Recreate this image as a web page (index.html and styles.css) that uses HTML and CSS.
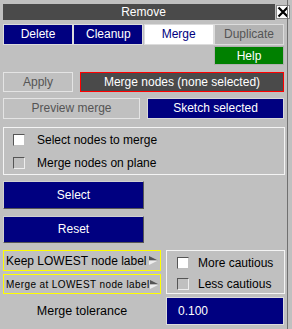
FILE: index.html
```html
<!DOCTYPE html>
<html lang="en">
<head>
<meta charset="utf-8">
<title>Remove</title>
<link rel="stylesheet" href="styles.css">
</head>
<body>
<div class="win">
  <div class="titlerow">
    <div class="title">Remove</div>
    <div class="close">
      <svg width="12" height="12" viewBox="0 0 12 12"><path d="M1.5 1.5 L10.5 10.5 M10.5 1.5 L1.5 10.5" stroke="#000" stroke-width="2.2"/></svg>
    </div>
  </div>

  <div class="tabs">
    <div class="tab navy">Delete</div>
    <div class="tab navy">Cleanup</div>
    <div class="tab active">Merge</div>
    <div class="tab off">Duplicate</div>
  </div>
  <div class="helprow">
    <div class="help">Help</div>
  </div>

  <div class="row r-apply">
    <div class="btn dis apply">Apply</div>
    <div class="btn status">Merge nodes (none selected)</div>
  </div>
  <div class="row r-preview">
    <div class="btn dis preview">Preview merge</div>
    <div class="btn navy sketch">Sketch selected</div>
  </div>

  <div class="group opts">
    <div class="chk"><span class="box white"></span>Select nodes to merge</div>
    <div class="chk"><span class="box"></span>Merge nodes on plane</div>
  </div>

  <div class="big navy sel">Select</div>
  <div class="big navy reset">Reset</div>

  <div class="bottom">
    <div class="lcol">
      <div class="pick keep">Keep LOWEST node label
        <svg class="arr" width="9" height="9" viewBox="0 0 9 9"><polygon points="0,0 9,4.5 0,4.5" fill="#555"/><polygon points="0,4.5 9,4.5 0,9" fill="#eee"/></svg>
      </div>
      <div class="pick at">Merge at LOWEST node label
        <svg class="arr" width="9" height="9" viewBox="0 0 9 9"><polygon points="0,0 9,4.5 0,4.5" fill="#555"/><polygon points="0,4.5 9,4.5 0,9" fill="#eee"/></svg>
      </div>
      <div class="tol-label">Merge tolerance</div>
    </div>
    <div class="rcol">
      <div class="group caut">
        <div class="chk"><span class="box white"></span>More cautious</div>
        <div class="chk"><span class="box"></span>Less cautious</div>
      </div>
      <div class="field">0.100</div>
    </div>
  </div>
</div>
</body>
</html>
```
FILE: styles.css
```css
body {
margin: 0;
background: #c0c0c0;
font-family: "Liberation Sans", Arial, sans-serif;
font-size: 12px;
color: #000;
}
.win {
width: 292px;
height: 329px;
box-sizing: border-box;
padding: 4px 0 0 3px;
position: relative;
}
.win:after {
content: "";
position: absolute;
top: 0;
bottom: 0;
left: 287px;
width: 1px;
background: #707070;
}

/* ---- title ---- */
.titlerow {display: flex; height: 16px;}
.title {
width: 272px;
background: #4a4a4a;
color: #fff;
text-align: center;
line-height: 16px;
padding-left: 9px;
box-sizing: border-box;
}
.close {
width: 14px;
height: 14px;
margin: 1px 0 0 1px;
background: #fff;
border: 1px solid #888;
box-sizing: border-box;
display: flex;
align-items: center;
justify-content: center;
}

/* ---- tabs ---- */
.tabs {
display: grid;
grid-template-columns: 70px 70px 70px 70px;
column-gap: 0.33px;
margin-top: 4px;
height: 21px;
}
.tab {
border: 1px solid #dcdcdc;
text-align: center;
line-height: 19px;
}
.navy {background: #000080; color: #fff;}
.tab.active {background: #fff; color: #000080;}
.tab.off {background: #b4b4b4; color: #555;}
.helprow {display: flex; justify-content: flex-end; width: 281px; margin-top: 1px;}
.help {
width: 70px;
height: 19px;
box-sizing: border-box;
background: #008000;
color: #fff;
text-align: center;
line-height: 19px;
border: 1px solid #b0b0b0;
}

/* ---- action rows ---- */
.row {display: flex; width: 281px; justify-content: space-between;}
.btn {
box-sizing: border-box;
text-align: center;
border: 1px solid #e4e4e4;
}
.btn.dis {color: #555;}
.r-apply {margin-top: 7px; height: 20px;}
.r-apply .btn {line-height: 18px;}
.apply {width: 70px;}
.status {width: 204px; background: #4a4a4a; color: #fff; border-color: #f00;}
.r-preview {margin-top: 6px; height: 21px;}
.r-preview .btn {line-height: 19px;}
.preview {width: 137px;}
.sketch {width: 137px; border-color: #d8d8d8;}

/* ---- option groups ---- */
.group {
border: 1px solid #f4f4f4;
box-sizing: border-box;
}
.opts {
width: 282px;
height: 48px;
margin-top: 8px;
padding-left: 9px;
}
.chk {
display: flex;
align-items: center;
height: 23px;
}
.box {
width: 12px;
height: 12px;
box-sizing: border-box;
border: 1px solid;
border-color: #555 #eee #eee #555;
background: #c0c0c0;
margin-right: 12px;
}
.box.white {background: #fff; border-color: #555 #c0c0c0 #c0c0c0 #555;}

.big {
width: 141px;
box-sizing: border-box;
border: 1px solid;
border-color: #d0d0d0 #555 #555 #d0d0d0;
text-align: center;
}
.sel {margin-top: 6px; height: 28px; line-height: 26px;}
.reset {margin-top: 7px; height: 27px; line-height: 25px;}

/* ---- bottom ---- */
.bottom {display: flex; margin-top: 7px;}
.lcol {width: 158px;}
.rcol {width: 119px; margin-left: 5px;}
.pick {
border: 1px solid #ffff00;
box-sizing: border-box;
display: flex;
align-items: center;
justify-content: space-between;
padding: 0 2px 0 2px;
white-space: nowrap;
}
.keep {height: 21px;}
.at {height: 20px; margin-top: 3px; font-size: 10px; letter-spacing: 0.4px;}
.arr {flex: none;}
.tol-label {height: 31px; line-height: 31px; text-align: center; padding-top: 2px; font-size: 12.5px;}
.caut {height: 44px; padding: 1px 0 0 10px;}
.caut .chk {height: 21px;}
.caut .box {margin-right: 9px;}
.field {
margin-top: 3px;
width: 118px;
height: 28px;
box-sizing: border-box;
background: #000080;
color: #fff;
border: 1px solid #dcdcdc;
padding-left: 11px;
line-height: 26px;
}
```
